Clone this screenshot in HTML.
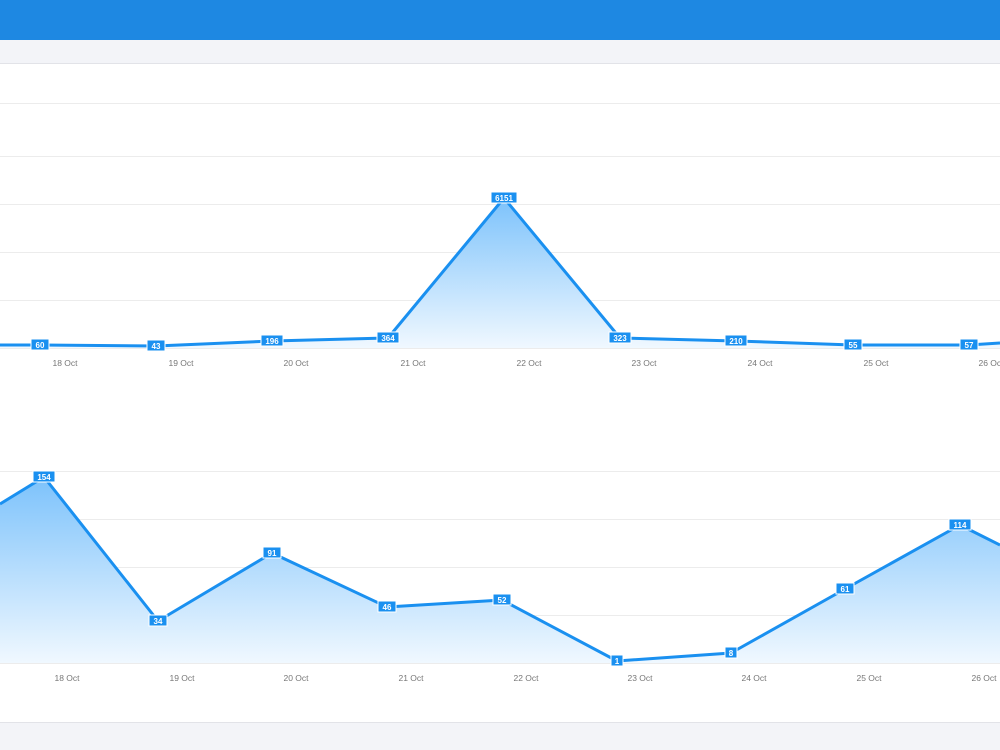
<!DOCTYPE html>
<html><head><meta charset="utf-8"><style>
html,body{margin:0;padding:0;width:1000px;height:750px;overflow:hidden;background:#f3f4f8;font-family:"Liberation Sans",sans-serif}
.top{position:absolute;left:0;top:0;width:1000px;height:40px;background:#1e88e2}
.card{position:absolute;left:0;top:63px;width:1000px;height:658px;background:#fff;border-top:1px solid #e2e3e8;border-bottom:1px solid #e2e3e8}
svg{position:absolute;left:0;top:0}
</style></head><body>
<div class="top"></div>
<div class="card"></div>
<svg width="1000" height="750" viewBox="0 0 1000 750">
<defs>
<linearGradient id="g1" x1="0" y1="198" x2="0" y2="348" gradientUnits="userSpaceOnUse"><stop offset="0" stop-color="#7cc2fb"/><stop offset="1" stop-color="#f0f8ff"/></linearGradient>
<linearGradient id="g2" x1="0" y1="477" x2="0" y2="663" gradientUnits="userSpaceOnUse"><stop offset="0" stop-color="#7cc2fb"/><stop offset="1" stop-color="#f0f8ff"/></linearGradient>
</defs>
<g stroke="#ececec" stroke-width="1">
<line x1="0" y1="103.5" x2="1000" y2="103.5"/><line x1="0" y1="156.5" x2="1000" y2="156.5"/><line x1="0" y1="204.5" x2="1000" y2="204.5"/><line x1="0" y1="252.5" x2="1000" y2="252.5"/><line x1="0" y1="300.5" x2="1000" y2="300.5"/><line x1="0" y1="348.5" x2="1000" y2="348.5"/>
<line x1="0" y1="471.5" x2="1000" y2="471.5"/><line x1="0" y1="519.5" x2="1000" y2="519.5"/><line x1="0" y1="567.5" x2="1000" y2="567.5"/><line x1="0" y1="615.5" x2="1000" y2="615.5"/><line x1="0" y1="663.5" x2="1000" y2="663.5"/>
</g>
<path d="M0 345 L40 345 L156 346 L272 341 L388 338 L504 198 L620 338 L736 341 L853 345 L969 345 L1000 343 L1000 348 L0 348Z" fill="url(#g1)"/>
<path d="M0 345 L40 345 L156 346 L272 341 L388 338 L504 198 L620 338 L736 341 L853 345 L969 345 L1000 343" fill="none" stroke="#1a90f0" stroke-width="3" stroke-linejoin="round"/>
<path d="M0 504 L44 477 L158 621 L272 553 L387 607 L502 600 L617 661 L731 653 L845 589 L960 525 L1000 545 L1000 663 L0 663Z" fill="url(#g2)"/>
<path d="M0 504 L44 477 L158 621 L272 553 L387 607 L502 600 L617 661 L731 653 L845 589 L960 525 L1000 545" fill="none" stroke="#1a90f0" stroke-width="3" stroke-linejoin="round"/>
<g fill="#777" font-size="8.5" text-anchor="middle">
<text x="65" y="366">18 Oct</text><text x="181" y="366">19 Oct</text><text x="296" y="366">20 Oct</text><text x="413" y="366">21 Oct</text><text x="529" y="366">22 Oct</text><text x="644" y="366">23 Oct</text><text x="760" y="366">24 Oct</text><text x="876" y="366">25 Oct</text><text x="991" y="366">26 Oct</text>
<text x="67" y="681">18 Oct</text><text x="182" y="681">19 Oct</text><text x="296" y="681">20 Oct</text><text x="411" y="681">21 Oct</text><text x="526" y="681">22 Oct</text><text x="640" y="681">23 Oct</text><text x="754" y="681">24 Oct</text><text x="869" y="681">25 Oct</text><text x="984" y="681">26 Oct</text>
</g>
<g font-size="8" font-weight="bold" fill="#fff" text-anchor="middle">
<g><rect x="31" y="339" width="18" height="11" fill="#1a90f0" stroke="#fff"/><text x="40" y="348">60</text></g>
<g><rect x="147" y="340" width="18" height="11" fill="#1a90f0" stroke="#fff"/><text x="156" y="349">43</text></g>
<g><rect x="261" y="335" width="22" height="11" fill="#1a90f0" stroke="#fff"/><text x="272" y="344">196</text></g>
<g><rect x="377" y="332" width="22" height="11" fill="#1a90f0" stroke="#fff"/><text x="388" y="341">364</text></g>
<g><rect x="491" y="192" width="26" height="11" fill="#1a90f0" stroke="#fff"/><text x="504" y="201">6151</text></g>
<g><rect x="609" y="332" width="22" height="11" fill="#1a90f0" stroke="#fff"/><text x="620" y="341">323</text></g>
<g><rect x="725" y="335" width="22" height="11" fill="#1a90f0" stroke="#fff"/><text x="736" y="344">210</text></g>
<g><rect x="844" y="339" width="18" height="11" fill="#1a90f0" stroke="#fff"/><text x="853" y="348">55</text></g>
<g><rect x="960" y="339" width="18" height="11" fill="#1a90f0" stroke="#fff"/><text x="969" y="348">57</text></g>
<g><rect x="33" y="471" width="22" height="11" fill="#1a90f0" stroke="#fff"/><text x="44" y="480">154</text></g>
<g><rect x="149" y="615" width="18" height="11" fill="#1a90f0" stroke="#fff"/><text x="158" y="624">34</text></g>
<g><rect x="263" y="547" width="18" height="11" fill="#1a90f0" stroke="#fff"/><text x="272" y="556">91</text></g>
<g><rect x="378" y="601" width="18" height="11" fill="#1a90f0" stroke="#fff"/><text x="387" y="610">46</text></g>
<g><rect x="493" y="594" width="18" height="11" fill="#1a90f0" stroke="#fff"/><text x="502" y="603">52</text></g>
<g><rect x="611" y="655" width="12" height="11" fill="#1a90f0" stroke="#fff"/><text x="617" y="664">1</text></g>
<g><rect x="725" y="647" width="12" height="11" fill="#1a90f0" stroke="#fff"/><text x="731" y="656">8</text></g>
<g><rect x="836" y="583" width="18" height="11" fill="#1a90f0" stroke="#fff"/><text x="845" y="592">61</text></g>
<g><rect x="949" y="519" width="22" height="11" fill="#1a90f0" stroke="#fff"/><text x="960" y="528">114</text></g>
</g>
</svg>
</body></html>
